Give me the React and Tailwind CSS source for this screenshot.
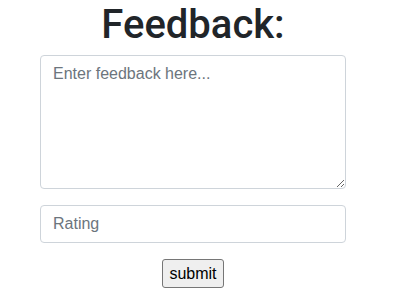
import { useState } from 'react';

export default function App() {
  const [feedback, setFeedback] = useState('');
  const [rating, setRating] = useState('');

  const handleSubmit = (e) => {
    e.preventDefault();
  };

  return (
    <div className="w-[386px] bg-white pt-[1px] font-['Liberation_Sans',Arial,sans-serif] text-[#212529]">
      <h1 className="text-center font-['Roboto',sans-serif] text-[40px] leading-[48px] font-medium mb-[6px]">Feedback:</h1>
      <form onSubmit={handleSubmit} className="w-[306px] mx-auto flex flex-col items-center">
        <textarea
          rows={5}
          placeholder="Enter feedback here..."
          value={feedback}
          onChange={(e) => setFeedback(e.target.value)}
          className="block w-full h-[134px] border border-[#ced4da] rounded-[4px] px-3 py-[6px] text-base leading-6 text-[#495057] placeholder:text-[#6c757d] mb-4 focus:outline-none"
        />
        <input
          type="text"
          placeholder="Rating"
          value={rating}
          onChange={(e) => setRating(e.target.value)}
          className="block w-full h-[38px] border border-[#ced4da] rounded-[4px] px-3 py-[6px] text-base leading-6 text-[#495057] placeholder:text-[#6c757d] mb-4 focus:outline-none"
        />
        <button
          type="submit"
          className="h-[29px] px-[6px] border border-[#767676] rounded-[3px] bg-[#efefef] text-base leading-6 text-black"
        >
          submit
        </button>
      </form>
    </div>
  );
}
